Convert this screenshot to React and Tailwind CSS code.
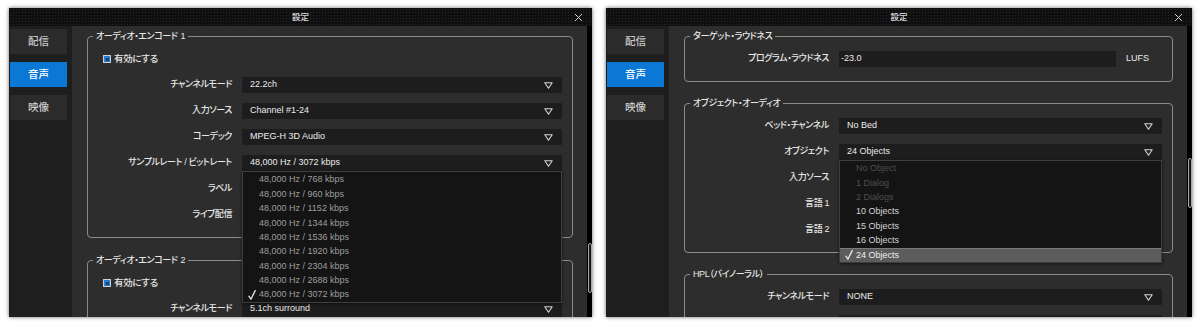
import React from "react";

const FONT =
  "font-['Liberation_Sans','Noto_Sans_CJK_JP',sans-serif] [font-feature-settings:'palt']";

function Tri() {
  return (
    <svg width="9" height="7" viewBox="0 0 9 7" className="shrink-0">
      <path
        d="M0.8 0.8 H8.2 L4.5 6.2 Z"
        fill="none"
        stroke="#d6d6d6"
        strokeWidth="1.1"
        strokeLinejoin="round"
      />
    </svg>
  );
}

function Check() {
  return (
    <svg width="8" height="10" viewBox="0 0 8 10">
      <path
        d="M0.9 6.2 L2.9 9.2 L7.2 0.6"
        fill="none"
        stroke="#e8e8e8"
        strokeWidth="1.3"
        strokeLinecap="round"
        strokeLinejoin="round"
      />
    </svg>
  );
}

function CloseX() {
  return (
    <svg width="9" height="9" viewBox="0 0 9 9">
      <path d="M1 1 L8 8 M8 1 L1 8" stroke="#d0d0d0" strokeWidth="1" />
    </svg>
  );
}

function Sidebar() {
  const items = [
    { t: "配信", active: false },
    { t: "音声", active: true },
    { t: "映像", active: false },
  ];
  return (
    <div className="flex w-[63px] shrink-0 flex-col gap-[8px] bg-[#1e1e1e] pt-[3px]">
      {items.map((it) => (
        <div
          key={it.t}
          className={
            it.active
              ? "ml-[1px] flex h-[25px] w-[57px] items-center justify-center bg-[#0b78d6] text-[10.5px] font-medium text-white"
              : "ml-[1px] flex h-[25px] w-[57px] items-center justify-center bg-[#2b2b2b] text-[10.5px] font-medium text-[#c8c8c8]"
          }
        >
          {it.t}
        </div>
      ))}
    </div>
  );
}

function Window({ className, thumbClass, children }) {
  return (
    <div
      className={`flex h-[309px] flex-col overflow-hidden bg-[#2d2d2d] shadow-[0_0_4px_rgba(0,0,0,0.6)] ${className}`}
    >
      <div className="grid h-[18px] shrink-0 grid-cols-[1fr_auto_1fr] items-center bg-[#0f0f0f] bg-[radial-gradient(#262626_0.6px,transparent_0.7px)] bg-[length:3px_3px]">
        <div />
        <div className="text-[8.5px] font-medium leading-[18px] text-[#dedede]">設定</div>
        <div className="flex justify-end pr-[9px]">
          <CloseX />
        </div>
      </div>
      <div className="flex min-h-0 flex-1">
        <Sidebar />
        <div className="min-w-0 flex-1 overflow-hidden bg-[#2d2d2d] pl-[15px] pr-[14px] pt-[4px]">
          {children}
        </div>
        <div className="w-[5px] shrink-0 bg-black">
          <div className={thumbClass} />
        </div>
      </div>
    </div>
  );
}

function Group({ legend, num, className = "", children }) {
  return (
    <fieldset
      className={`min-w-0 rounded-[4px] border border-[#8a8a8a] pb-[9px] pr-[10px] pt-[4px] ${className}`}
    >
      <legend className="ml-[5px] px-[3px] text-[9px] font-medium leading-[12px] text-[#e6e6e6]">
        <span className="tracking-[-0.4px]">{legend}</span>
        {num ? <span className="ml-[3px]">{num}</span> : null}
      </legend>
      {children}
    </fieldset>
  );
}

function CheckRow() {
  return (
    <div className="flex h-[26px] items-center pl-[15px]">
      <div className="flex h-[8px] w-[8px] items-center justify-center border border-[#cfcfcf] bg-[#2a7ad0]">
        <div className="h-[3px] w-[3px] bg-[#1b3f6e]" />
      </div>
      <span className="ml-[3px] text-[9.5px] font-medium tracking-[-0.3px] text-[#e8e8e8]">
        有効にする
      </span>
    </div>
  );
}

function Row({ label, children }) {
  return (
    <div className="flex h-[26px] items-center">
      <div className="w-[144px] shrink-0 text-right text-[9px] font-medium tracking-[-0.4px] text-[#e8e8e8]">
        {label}
      </div>
      <div className="ml-[10px] min-w-0 flex-1">{children}</div>
    </div>
  );
}

function Select({ value = "", children }) {
  return (
    <div className="relative flex h-[16px] items-center bg-[#1d1d1d] pl-[8px] pr-[9px] text-[9px] text-[#ececec]">
      <span className="flex-1 truncate">{value}</span>
      <Tri />
      {children}
    </div>
  );
}

function TextField({ value = "", className = "" }) {
  return (
    <div
      className={`flex h-[16px] items-center bg-[#1d1d1d] pl-[2px] text-[9px] text-[#ececec] ${className}`}
    >
      {value}
    </div>
  );
}

function Dropdown({ items, itemH }) {
  return (
    <div className="absolute left-0 right-0 top-full z-10 border border-[#3e3e3e] bg-[#141414] pt-[1px] shadow-[0_1px_3px_rgba(0,0,0,0.6)]">
      {items.map((it) => (
        <div
          key={it.t}
          className={
            it.sel && it.hl
              ? "flex items-center border-t border-[#7a7a7a] bg-[#5c5c5c] pl-[5px] text-[9px] text-[#f0f0f0]"
              : "flex items-center pl-[5px] text-[9px]"
          }
          style={{ height: itemH }}
        >
          <span className="flex w-[11px] items-center">{it.sel ? <Check /> : null}</span>
          <span
            className={
              it.dis
                ? "text-[#4e4e4e]"
                : it.hl
                ? "text-[#f0f0f0]"
                : it.bright
                ? "text-[#d6d6d6]"
                : "text-[#9e9e9e]"
            }
          >
            {it.t}
          </span>
        </div>
      ))}
    </div>
  );
}

const rates = ["768", "960", "1152", "1344", "1536", "1920", "2304", "2688", "3072"].map(
  (k) => ({ t: `48,000 Hz / ${k} kbps`, sel: k === "3072" })
);

const objs = [
  { t: "No Object", dis: true },
  { t: "1 Dialog", dis: true },
  { t: "2 Dialogs", dis: true },
  { t: "10 Objects", bright: true },
  { t: "15 Objects", bright: true },
  { t: "16 Objects", bright: true },
  { t: "24 Objects", sel: true, hl: true },
];

export default function App() {
  return (
    <div className={`flex h-[326px] w-[1200px] gap-[14px] overflow-hidden bg-white pl-[9px] pt-[8px] ${FONT}`}>
      <Window
        className="w-[583px]"
        thumbClass="ml-[1px] mt-[217px] h-[50px] w-[4px] rounded-[2px] border border-[#a8a8a8] bg-[#1a1a1a]"
      >
        <Group legend="オーディオ・エンコード" num="1">
          <CheckRow />
          <Row label="チャンネルモード">
            <Select value="22.2ch" />
          </Row>
          <Row label="入力ソース">
            <Select value="Channel #1-24" />
          </Row>
          <Row label="コーデック">
            <Select value="MPEG-H 3D Audio" />
          </Row>
          <Row label="サンプルレート / ビットレート">
            <Select value="48,000 Hz / 3072 kbps">
              <Dropdown items={rates} itemH="14.375px" />
            </Select>
          </Row>
          <Row label="ラベル">
            <TextField />
          </Row>
          <Row label="ライブ配信">
            <Select />
          </Row>
        </Group>
        <Group legend="オーディオ・エンコード" num="2" className="mt-[16px]">
          <CheckRow />
          <Row label="チャンネルモード">
            <Select value="5.1ch surround" />
          </Row>
        </Group>
      </Window>
      <Window
        className="w-[586px]"
        thumbClass="ml-[1px] mt-[132px] h-[50px] w-[4px] rounded-[2px] border border-[#a8a8a8] bg-[#1a1a1a]"
      >
        <Group legend="ターゲット・ラウドネス">
          <Row label="プログラム・ラウドネス">
            <div className="flex items-center">
              <TextField value="-23.0" className="flex-1" />
              <span className="w-[46px] shrink-0 pl-[10px] text-[9px] text-[#ececec]">LUFS</span>
            </div>
          </Row>
        </Group>
        <Group legend="オブジェクト・オーディオ" className="mt-[15px]">
          <Row label="ベッド・チャンネル">
            <Select value="No Bed" />
          </Row>
          <Row label="オブジェクト">
            <Select value="24 Objects">
              <Dropdown items={objs} itemH="14.3px" />
            </Select>
          </Row>
          <Row label="入力ソース">
            <Select />
          </Row>
          <Row label="言語 1">
            <Select />
          </Row>
          <Row label="言語 2">
            <Select />
          </Row>
        </Group>
        <Group legend="HPL（バイノーラル）" className="mt-[15px]">
          <Row label="チャンネルモード">
            <Select value="NONE" />
          </Row>
          <Row label="入力ソース">
            <Select />
          </Row>
        </Group>
      </Window>
    </div>
  );
}
